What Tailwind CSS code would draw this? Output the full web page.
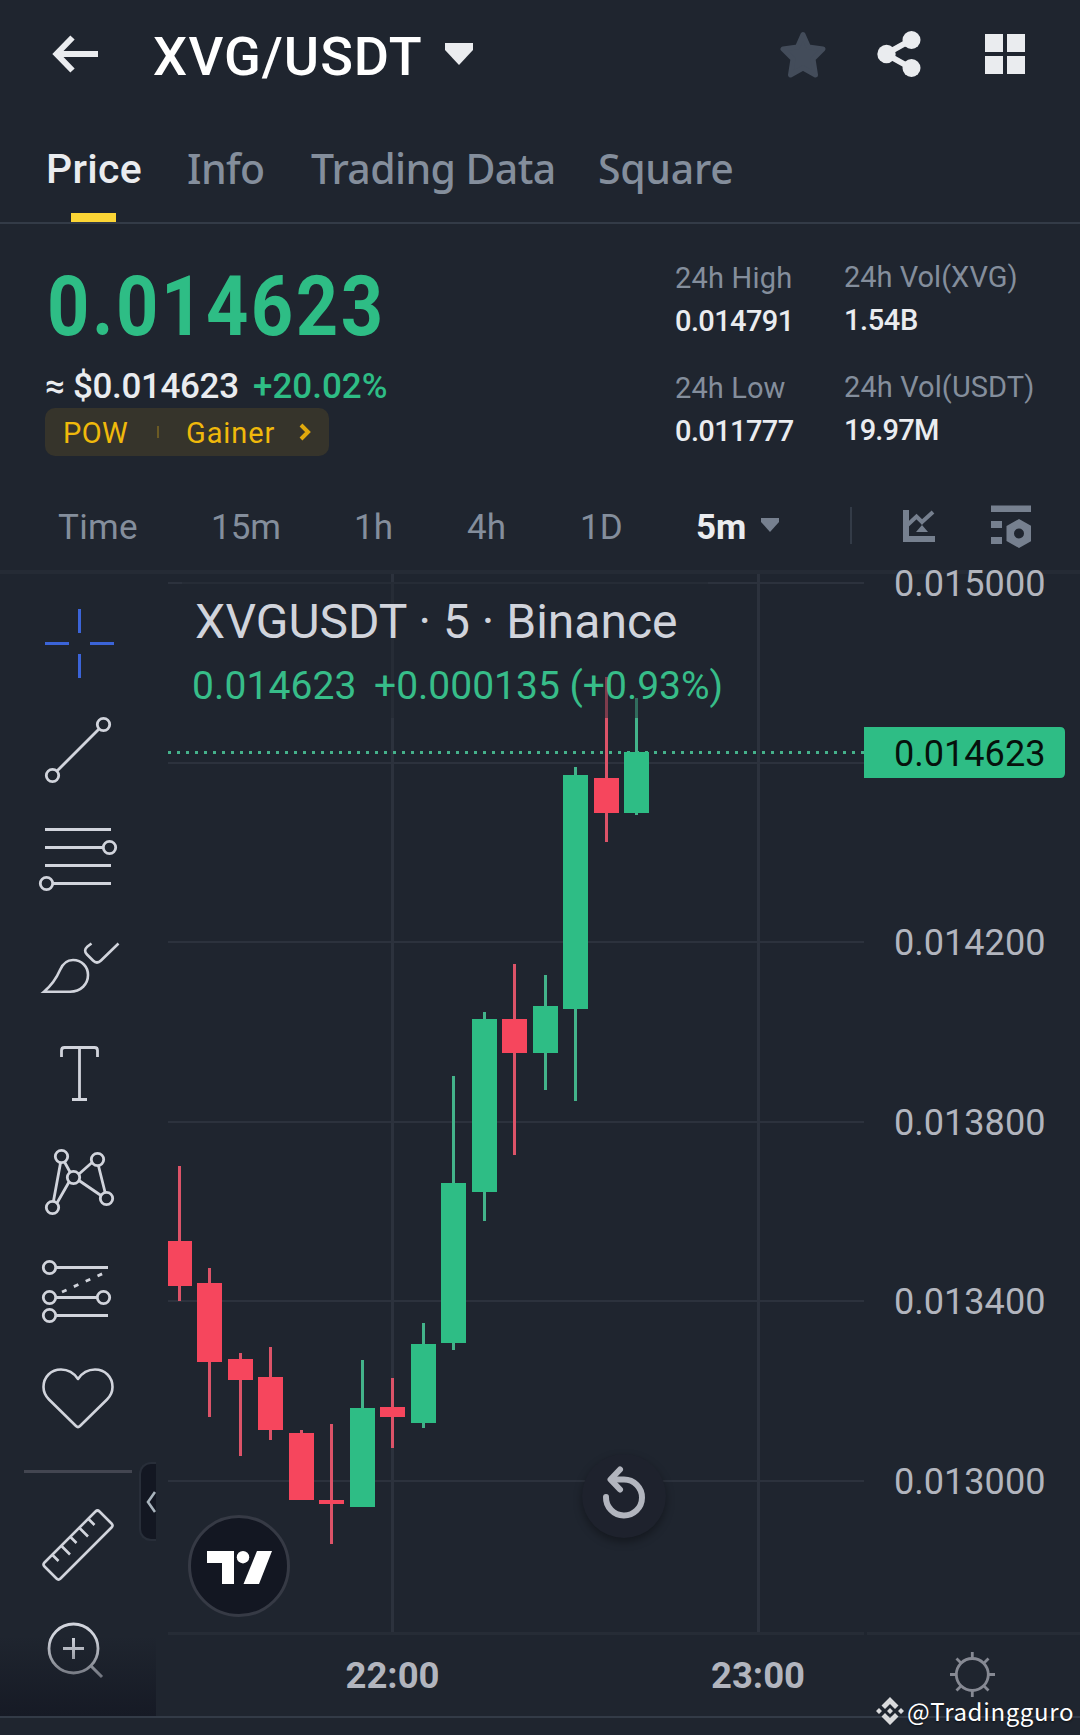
<!DOCTYPE html>
<html lang="en">

<head>
    <meta charset="UTF-8">
    <meta name="viewport" content="width=device-width, initial-scale=1.0">
    <script src="https://cdn.jsdelivr.net/npm/@tailwindcss/browser@4"></script>
    <title>XVG/USDT</title>
</head>

<body class="bg-[#1f252f] font-[Roboto,sans-serif]">
    <div class="relative w-[1080px] h-[1735px] overflow-hidden whitespace-nowrap">

        <!-- Header -->
        <header class="flex h-[112px] items-center text-[#eaecef]">
            <svg class="ml-[52px] -mt-1 w-[46px] h-[38px]" viewBox="0 0 46 38" fill="none" stroke="currentColor" stroke-width="6">
                <path d="M5 19H46" />
                <path d="M20.500 2.500L4.500 19L20.500 35.500" />
            </svg>
            <h1 class="ml-[55px] mt-0.5 w-[292px] text-[54px] leading-[64px] font-medium tracking-[1px] text-white">XVG/USDT</h1>
            <svg class="-mt-1 w-[28px] h-[22px]" viewBox="0 0 28 22" fill="currentColor">
                <path d="M0 0H28V7L14 22L0 7Z" />
            </svg>
            <!-- Actions -->
            <svg class="ml-[307px] w-[46px] h-[48px] -mt-0.5" viewBox="0 0 46 48" fill="#434c5a" stroke="#434c5a" stroke-width="5" stroke-linejoin="round">
                <path d="M23 3.500L28.500 16L43 18L33 28L35.500 44L23 37L10.500 44L13 28L3 18L17.500 16Z" />
            </svg>
            <svg class="ml-[51px] -mt-1 w-[44px] h-[48px]" viewBox="0 0 44 48" fill="currentColor">
                <path d="M34 10L9 24L34 38" fill="none" stroke="currentColor" stroke-width="6" />
                <circle cx="9.500" cy="24" r="9.200" />
                <circle cx="34.500" cy="10" r="9" />
                <circle cx="34.500" cy="38" r="9" />
            </svg>
            <div class="ml-[64px] -mt-1 grid grid-cols-2 gap-x-[4px] gap-y-[4px] w-[40px] h-[40px]">
                <span class="bg-[#eaecef]"></span>
                <span class="bg-[#eaecef]"></span>
                <span class="bg-[#eaecef]"></span>
                <span class="bg-[#eaecef]"></span>
            </div>
        </header>

        <!-- Tabs -->
        <nav class="flex h-[112px] pl-[46px] border-b-2 border-[#333b47] text-[41px] leading-[114px] font-medium text-[#848e9c]">
            <a class="relative w-[141px] text-[#eaecef] tracking-[0.3px]">Price
                <span class="absolute left-[25px] bottom-0 w-[45px] h-[9px] bg-[#fcd535]"></span>
            </a>
            <a class="w-[124px] leading-[112px] font-['Noto_Sans',sans-serif] tracking-[-0.6px]">Info</a>
            <a class="w-[287px] leading-[112px] font-['Noto_Sans',sans-serif] tracking-[-0.6px]">Trading Data</a>
            <a class="leading-[112px] font-['Noto_Sans',sans-serif] tracking-[-0.3px]">Square</a>
        </nav>

        <!-- Price summary -->
        <section class="flex h-[266px] pl-[45px]">
            <div class="w-[630px] pt-[43px]">
                <div class="ml-[2px] text-[84px] leading-[80px] font-bold tracking-[2.9px] text-[#2ebd85] origin-left scale-x-[0.88]">0.014623</div>
                <div class="mt-[19px] flex text-[35px] leading-[42px] font-medium text-[#eaecef]">
                    <span class="w-[208px] tracking-[-0.35px]">≈ $0.014623</span>
                    <span class="text-[#2ebd85]">+20.02%</span>
                </div>
                <div class="flex items-center w-[284px] h-[48px] pl-[18px] rounded-[10px] bg-[#36342b] text-[29px] text-[#f0b90b]">
                    <span class="mt-[3px] w-[94px] tracking-[0.4px]">POW</span>
                    <span class="w-[2px] h-[12px] bg-[#6b5a24]"></span>
                    <span class="mt-[3px] ml-[27px] w-[113px] tracking-[0.9px]">Gainer</span>
                    <svg class="w-[13px] h-[18px]" viewBox="0 0 13 18" fill="none" stroke="#e0a90c" stroke-width="4">
                        <path d="M2 2L9 9L2 16" />
                    </svg>
                </div>
            </div>
            <div class="flex pt-[33px] text-[29px] leading-[43px] text-[#848e9c]">
                <div class="w-[169px]">
                    <p class="tracking-[0.2px]">24h High</p>
                    <p class="mb-[24px] font-medium text-[#eaecef] tracking-[-0.6px]">0.014791</p>
                    <p class="tracking-[0.1px]">24h Low</p>
                    <p class="font-medium text-[#eaecef] tracking-[-0.6px]">0.011777</p>
                </div>
                <div class="-mt-[1px]">
                    <p>24h Vol(XVG)</p>
                    <p class="mb-[24px] font-medium text-[#eaecef] tracking-[-0.4px]">1.54B</p>
                    <p class="tracking-[0.1px]">24h Vol(USDT)</p>
                    <p class="font-medium text-[#eaecef] tracking-[-0.8px]">19.97M</p>
                </div>
            </div>
        </section>

        <!-- Intervals -->
        <div class="flex h-[84px] pb-[3px] pl-[58px] items-center border-b-4 border-[#252b35] text-[35px] text-[#848e9c]">
            <span class="w-[153px] tracking-[0.3px]">Time</span>
            <span class="w-[143px]">15m</span>
            <span class="w-[113px]">1h</span>
            <span class="w-[113px]">4h</span>
            <span class="w-[116px]">1D</span>
            <span class="w-[65px] font-bold text-[#eaecef]">5m</span>
            <svg class="-mt-2 w-[18px] h-[14px]" viewBox="0 0 18 14" fill="#76808f">
                <path d="M0 0H18V4L9 14L0 4Z" />
            </svg>
            <span class="ml-[71px] w-[2px] h-[37px] -mt-1.5 bg-[#333b47]"></span>
            <svg class="ml-[51px] -mt-1.5 w-[32px] h-[32px]" viewBox="0 0 32 32" fill="#76808f">
                <path d="M0 0H6V26H32V32H0Z" />
                <path d="M4.500 15L13.500 6.500L19 12L30 2" fill="none" stroke="#76808f" stroke-width="4" />
                <path d="M17 11H21L19 15L25 22H13L19 15Z" />
            </svg>
            <svg class="ml-[56px] -mt-1 w-[40px] h-[43px]" viewBox="0 0 40 43" fill="#76808f">
                <path d="M0 0.500H40V7H0ZM0 16H11V23H0ZM0 32H11V39H0Z" />
                <path fill-rule="evenodd" d="M28 14L40.500 21V36L28 43L15.500 36V21ZM28 23.500A5 5 0 1 0 28 33.500A5 5 0 1 0 28 23.500Z" />
            </svg>
        </div>

        <main class="relative flex h-[1142px]">
            <!-- Drawing tools, each slot is 108px tall -->
            <aside class="flex flex-col w-[156px] pt-[16px]">
                <svg class="h-[108px] shrink-0" viewBox="0 0 156 108" fill="none" stroke="#3b64d8" stroke-width="3">
                    <path d="M79.500 19V43M79.500 64V88M45 53.500H69M90 53.500H114" />
                </svg>
                <svg class="h-[108px] shrink-0" viewBox="0 0 156 108" fill="none" stroke="#d1d4dc" stroke-width="2.800">
                    <circle cx="103.500" cy="26.500" r="6.200" />
                    <circle cx="52.500" cy="77.500" r="6.200" />
                    <path d="M57 73L99 31" />
                </svg>
                <svg class="h-[108px] shrink-0" viewBox="0 0 156 108" fill="none" stroke="#d1d4dc" stroke-width="2.800">
                    <path d="M45 23.500H111M45 41.500H103M45 59.500H111M53 77.500H111" />
                    <circle cx="109.500" cy="41.500" r="6.200" />
                    <circle cx="46.500" cy="77.500" r="6.200" />
                </svg>
                <svg class="h-[108px] shrink-0" viewBox="0 0 156 108" fill="none" stroke="#d1d4dc" stroke-width="2.600">
                    <path d="M44 77.700C53 70 57 63 60 56C63 49 67 46 73 46C82 46 88 53 88 61C88 70 81 77.700 70 77.700Z" />
                    <path d="M91.500 29.500L87.500 32.500Q83 36.500 87 40.500L93 46.500Q97 50.500 101 46.500L118.500 29.500" />
                </svg>
                <svg class="h-[108px] shrink-0" viewBox="0 0 156 108" fill="none" stroke="#d1d4dc" stroke-width="2.800">
                    <path d="M61.500 35V28.500Q61.500 25.500 64.500 25.500H94.500Q97.500 25.500 97.500 28.500V35M79.500 25.500V77.500M72 77.500H87" />
                </svg>
                <svg class="h-[108px] shrink-0" viewBox="0 0 156 108" fill="none" stroke="#d1d4dc" stroke-width="2.800">
                    <circle cx="61.500" cy="26.500" r="6.200" />
                    <circle cx="97.500" cy="29.500" r="6.200" />
                    <circle cx="73.500" cy="47.500" r="6.200" />
                    <circle cx="52.500" cy="77.500" r="6.200" />
                    <circle cx="106.500" cy="68.500" r="6.200" />
                    <path d="M64.500 32L70 42M92 32.500L79 44M79 50.500L101 65.500M60.500 33L53.500 71M98.500 36L105 62M69 52L57 73" />
                </svg>
                <svg class="h-[108px] shrink-0" viewBox="0 0 156 108" fill="none" stroke="#d1d4dc" stroke-width="2.800">
                    <circle cx="49.500" cy="29.500" r="6.200" />
                    <circle cx="49.500" cy="59.500" r="6.200" />
                    <circle cx="103.500" cy="59.500" r="6.200" />
                    <circle cx="49.500" cy="77.500" r="6.200" />
                    <path d="M56 29.500H108M56 59.500H97M56 77.500H108" />
                    <path d="M62 54L104 35" stroke-dasharray="5 8" />
                </svg>
                <svg class="h-[108px] shrink-0" viewBox="0 0 156 108" fill="none" stroke="#d1d4dc" stroke-width="2.600" stroke-linejoin="round">
                    <path d="M78 33C74 27 68 23.500 61 23.500C51 23.500 43.500 31 43.500 41C43.500 46 45.500 50 49 53.500L76 80Q78 82 80 80L107 53.500C110.500 50 112.500 46 112.500 41C112.500 31 105 23.500 95 23.500C88 23.500 82 27 78 33Z" />
                </svg>
                <div class="ml-[24px] mt-[16px] mb-[17px] w-[108px] h-[3px] shrink-0 bg-[#434651]"></div>
                <svg class="h-[108px] shrink-0" viewBox="0 0 156 108" fill="none" stroke="#d1d4dc" stroke-width="2.600">
                    <path d="M95.500 21.500Q97.500 19.500 99.500 21.500L111.500 33.500Q113.500 35.500 111.500 37.500L60.500 88.500Q58.500 90.500 56.500 88.500L44.500 76.500Q42.500 74.500 44.500 72.500Z" />
                    <path d="M52.500 65L58.500 71M61.500 56L70 64.500M70.500 47L76.500 53M79.500 38L88 46.500M88.500 29L94.500 35" />
                </svg>
                <svg class="h-[108px] shrink-0" viewBox="0 0 156 108" fill="none" stroke="#d1d4dc" stroke-width="2.800">
                    <circle cx="73.500" cy="50.500" r="24.500" />
                    <path d="M63 50.500H84M73.500 40V61M91 68L102 79" stroke-width="3" />
                </svg>
            </aside>
            <div class="absolute left-0 bottom-0 w-[156px] h-[80px] bg-linear-to-b from-[#161a25]/0 to-[#161a25]"></div>

            <!-- Collapse handle -->
            <div class="absolute left-[139px] top-[888px] flex items-center justify-end w-[17px] h-[79px] rounded-l-[12px] border-2 border-r-0 border-[#282e39] bg-[#131722]">
                <svg class="w-[10px] h-[22px]" viewBox="0 0 10 22" fill="none" stroke="#a9b4bd" stroke-width="2.600">
                    <path d="M9 1L2 11L9 21" />
                </svg>
            </div>

            <!-- Chart -->
            <svg id="chart" class="ml-[12px] w-[912px] h-[1142px] overflow-visible" viewBox="168 574 912 1142" shape-rendering="crispEdges">
                <g id="grid" fill="#2c323d"></g>
                <g fill="#262c36">
                    <rect x="168" y="1632" width="696" height="3" />
                    <rect x="867" y="1632" width="213" height="3" />
                </g>
                <path d="M168 752.500H864" stroke="#45b28b" stroke-width="3" stroke-dasharray="3 6" />
                <g id="candles"></g>
                <!-- Dims what lies behind the legend -->
                <rect x="182" y="582" width="526" height="136" fill="#1f252f" fill-opacity="0.5" />
                <g id="prices" fill="#b2b5be" font-size="36.100" shape-rendering="auto"></g>
                <path d="M864 727H1060Q1065 727 1065 732V773Q1065 778 1060 778H864Z" fill="#2ebd85" shape-rendering="auto" />
                <text x="894" y="766" font-size="36.100" fill="#06110c">0.014623</text>
                <g fill="#b2b5be" font-size="36.500" font-weight="700" text-anchor="middle">
                    <text x="392.500" y="1687.500">22:00</text>
                    <text x="758" y="1687.500">23:00</text>
                </g>
                <g fill="none" stroke="#868993" stroke-width="2.800" shape-rendering="auto">
                    <circle cx="972.300" cy="1674.500" r="16" />
                    <path d="M972.300 1658V1652M972.300 1691V1697M956 1674.500H950M989 1674.500H995M961 1663L956.500 1658.500M984 1663L988.500 1658.500M961 1686L956.500 1690.500M984 1686L988.500 1690.500" />
                </g>
            </svg>

            <!-- Legend -->
            <div class="absolute left-[195px] top-[18px] text-[#d1d4dc]">
                <div class="text-[48px] leading-[60px]">XVGUSDT · 5 · Binance</div>
                <div class="mt-[4px] -ml-[3px] flex text-[39px] leading-[60px] text-[#37bd89]">
                    <span class="w-[182px] tracking-[0.1px]">0.014623</span>
                    <span>+0.000135 (+0.93%)</span>
                </div>
            </div>

            <!-- TradingView badge -->
            <div class="absolute left-[188px] top-[941px] flex items-center justify-center size-[102px] rounded-full border-3 border-[#363a45] bg-[#131722]">
                <svg class="mt-[2px] w-[65px] h-[33px]" viewBox="0 0 65 33" fill="#fff">
                    <path d="M0 0H27V33H15V12H0Z" />
                    <circle cx="36" cy="6.200" r="6.200" />
                    <path d="M50 0H65L52 33H36.500Z" />
                </svg>
            </div>

            <!-- Reset view -->
            <div class="absolute left-[582px] top-[880px] size-[84px] rounded-full bg-[#1e222d] shadow-[0_4px_8px_rgba(0,0,0,0.35)]">
                <svg class="size-[84px]" viewBox="0 0 84 84" fill="none" stroke="#b2b5be" stroke-width="6" stroke-linecap="round">
                    <path d="M24 43A18 18 0 1 0 42 25.500H30" />
                    <path d="M38 15.500L28.500 25.500L38 35.500" stroke-linejoin="round" />
                </svg>
            </div>
        </main>
        <div class="h-[2px] bg-[#333b47]"></div>

        <!-- Watermark -->
        <div class="absolute left-[876px] top-[1692px] flex items-center h-[38px] text-white">
            <svg class="w-[28px] h-[28px]" viewBox="0 0 28 28" fill="#d9dadc">
                <path d="M14 0L22.500 8.500L19 12L14 7L9 12L5.500 8.500ZM14 28L22.500 19.500L19 16L14 21L9 16L5.500 19.500ZM14 11L17 14L14 17L11 14ZM3 11L6 14L3 17L0 14ZM25 11L28 14L25 17L22 14Z" />
            </svg>
            <span class="-mt-px ml-[3px] text-[24px] leading-[38px] font-normal tracking-[0.65px] font-['Noto_Sans_CJK_SC',sans-serif] [text-shadow:0_1px_2px_rgba(0,0,0,0.6)]">@Tradingguro</span>
        </div>
    </div>

    <script>
        const UP = "#2ebd85";
        const DOWN = "#f6465d";

        // [direction, left, width, body top, body bottom, wick top, wick bottom]
        const candles = [
            ["down", 168, 24, 1241, 1286, 1166, 1301],
            ["down", 197, 25, 1283, 1362, 1268, 1417],
            ["down", 228, 25, 1359, 1380, 1353, 1456],
            ["down", 258, 25, 1377, 1430, 1347, 1440],
            ["down", 289, 25, 1433, 1500, 1430, 1500],
            ["down", 319, 25, 1500, 1504, 1424, 1544],
            ["up", 350, 25, 1408, 1507, 1360, 1507],
            ["down", 380, 25, 1407, 1417, 1378, 1448],
            ["up", 411, 25, 1344, 1423, 1323, 1428],
            ["up", 441, 25, 1183, 1343, 1076, 1350],
            ["up", 472, 25, 1019, 1192, 1012, 1221],
            ["down", 502, 25, 1019, 1053, 964, 1155],
            ["up", 533, 25, 1006, 1053, 975, 1090],
            ["up", 563, 25, 775, 1009, 767, 1101],
            ["down", 594, 25, 778, 813, 677, 842],
            ["up", 624, 25, 752, 813, 698, 815]
        ];

        // Price levels and where their grid lines lie
        const levels = [
            ["0.015000", 582],
            ["", 762],
            ["0.014200", 941],
            ["0.013800", 1121],
            ["0.013400", 1300],
            ["0.013000", 1480]
        ];

        document.getElementById("candles").innerHTML = candles.map(([dir, x, w, top, bottom, high, low]) => {
            const wickX = x + w - 14;
            return `
                <rect x="${wickX}" y="${high}" width="3" height="${low - high}" fill="${dir === "up" ? "#43b38a" : "#dc5368"}" />
                <rect x="${x}" y="${top}" width="${w}" height="${bottom - top}" fill="${dir === "up" ? UP : DOWN}" />
            `;
        }).join("");

        document.getElementById("grid").innerHTML =
            levels.map(([label, y]) => `<rect x="168" y="${y}" width="696" height="2" />`).join("") +
            [391, 757].map(x => `<rect x="${x}" y="574" width="3" height="1058" />`).join("");

        document.getElementById("prices").innerHTML =
            levels.map(([label, y]) => `<text x="894" y="${y + 14}">${label}</text>`).join("");
    </script>
</body>

</html>
